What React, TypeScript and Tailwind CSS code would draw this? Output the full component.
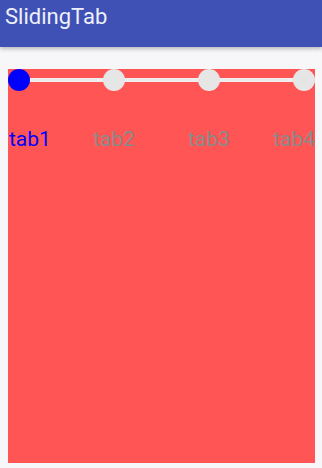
import React from 'react';

const tabs = [
  { label: 'tab1', active: true },
  { label: 'tab2', active: false },
  { label: 'tab3', active: false },
  { label: 'tab4', active: false },
];

export default function App() {
  return (
    <div className="w-[322px] h-[468px] bg-[#f7f7f9] overflow-hidden" style={{ fontFamily: 'Roboto, sans-serif' }}>
      <div className="h-[47px] bg-[#3f51b5] pt-[6px] pl-[5px] shadow-[0_2px_4px_rgba(0,0,0,0.25)] relative z-10">
        <span className="block text-[22px] text-[#eef0fa] leading-[22px]">SlidingTab</span>
      </div>

      <div className="mt-[22px] ml-[8px] w-[307px] h-[394px] bg-[#ff5555] overflow-hidden">
        {/* slider track */}
        <div className="relative h-[22px]">
          <div className="absolute left-[11px] right-[11px] top-[9px] h-[4px] bg-[#eeeeee]" />
          <div className="relative flex justify-between">
            {tabs.map((t) => (
              <div
                key={t.label}
                className={`w-[22px] h-[22px] rounded-full ${t.active ? 'bg-[#0000ff]' : 'bg-[#e6e6e6]'}`}
              />
            ))}
          </div>
        </div>

        <div className="grid grid-cols-[84px_95px_85px_60px] mt-[36px] pl-[1px]">
          {tabs.map((t) => (
            <span
              key={t.label}
              className={`text-[21px] leading-[24px] whitespace-nowrap ${t.active ? 'text-[#0000ff]' : 'text-[#8a8a8a]'}`}
            >
              {t.label}
            </span>
          ))}
        </div>
      </div>
    </div>
  );
}
